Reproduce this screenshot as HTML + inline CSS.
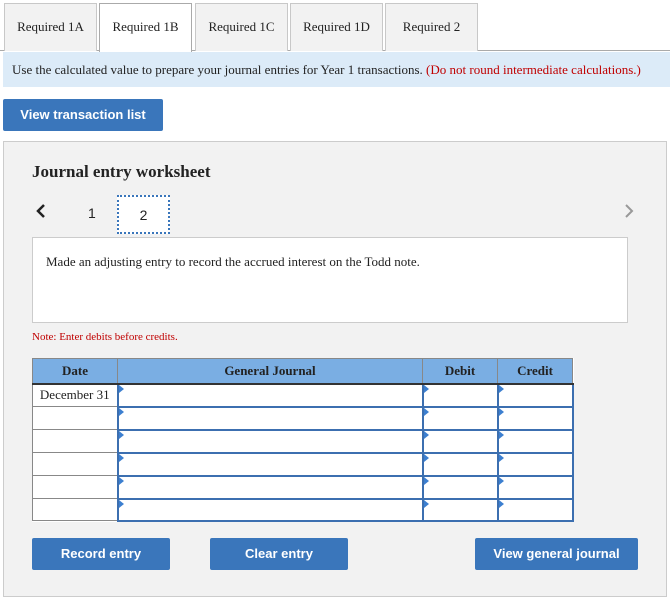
<!DOCTYPE html><html><head><style>
*{box-sizing:border-box;margin:0;padding:0}
body{width:670px;height:599px;background:#fff;font-family:"Liberation Serif",serif;position:relative;overflow:hidden;color:#222}
.a{position:absolute}
.tab{position:absolute;top:3px;height:48px;width:93px;background:#f2f2f2;border:1px solid #c8c8c8;border-bottom:none;font-size:13px;text-align:center;line-height:46px}
.btn{position:absolute;background:#3a76bb;color:#fff;font-family:"Liberation Sans",sans-serif;font-weight:bold;font-size:13px;text-align:center;border-radius:2px}
td{border:1px solid #888;padding:0;font-size:13px}
.i{border:2px solid #3c6fb0;background:#fff;position:relative}
.i:before{content:"";position:absolute;left:0;top:0;border-left:5px solid #3c7fd0;border-top:4px solid transparent;border-bottom:4px solid transparent}
</style></head><body>
<div class="a" style="left:0;top:50px;width:670px;height:1px;background:#aaa"></div>
<div class="tab" style="left:4px">Required 1A</div>
<div class="tab" style="left:99px;background:#fff;height:49px;border-color:#aaa">Required 1B</div>
<div class="tab" style="left:195px">Required 1C</div>
<div class="tab" style="left:290px">Required 1D</div>
<div class="tab" style="left:385px">Required 2</div>
<div class="a" style="left:3px;top:52px;width:667px;height:35px;background:#dcebf8;font-size:13px;line-height:35px;padding-left:9px">Use the calculated value to prepare your journal entries for Year 1 transactions. <span style="color:#c00000">(Do not round intermediate calculations.)</span></div>
<div class="btn" style="left:3px;top:99px;width:160px;height:32px;line-height:32px">View transaction list</div>
<div class="a" style="left:3px;top:141px;width:664px;height:456px;background:#f2f2f2;border:1px solid #ccc"></div>
<div class="a" style="left:32px;top:162px;font-size:17px;font-weight:bold">Journal entry worksheet</div>
<svg class="a" style="left:34px;top:203px" width="14" height="16"><path d="M10 2L4 8L10 14" stroke="#222" stroke-width="2.5" fill="none"/></svg>
<div class="a" style="left:88px;top:205px;font-family:'Liberation Sans',sans-serif;font-size:14px">1</div>
<div class="a" style="left:117px;top:195px;width:53px;height:39px;background:#fff;border:2px dotted #3a76bb;text-align:center;line-height:36px;font-family:'Liberation Sans',sans-serif;font-size:14px">2</div>
<svg class="a" style="left:622px;top:203px" width="14" height="16"><path d="M4 2L10 8L4 14" stroke="#999" stroke-width="2" fill="none"/></svg>
<div class="a" style="left:32px;top:237px;width:596px;height:86px;background:#fff;border:1px solid #ccc;font-size:13px;padding:16px 0 0 13px">Made an adjusting entry to record the accrued interest on the Todd note.</div>
<div class="a" style="left:32px;top:331px;font-size:11px;color:#c00000">Note: Enter debits before credits.</div>
<table class="a" style="left:32px;top:358px;border-collapse:collapse;background:#fff">
<tr style="height:25px;background:#7aaee3;font-weight:bold;text-align:center"><td style="width:85px;border-bottom:2px solid #333">Date</td><td style="width:305px;border-bottom:2px solid #333">General Journal</td><td style="width:75px;border-bottom:2px solid #333">Debit</td><td style="width:75px;border-bottom:2px solid #333">Credit</td></tr>
<tr style="height:23px"><td style="text-align:center">December 31</td><td class="i"></td><td class="i"></td><td class="i"></td></tr>
<tr style="height:23px"><td></td><td class="i"></td><td class="i"></td><td class="i"></td></tr>
<tr style="height:23px"><td></td><td class="i"></td><td class="i"></td><td class="i"></td></tr>
<tr style="height:23px"><td></td><td class="i"></td><td class="i"></td><td class="i"></td></tr>
<tr style="height:23px"><td></td><td class="i"></td><td class="i"></td><td class="i"></td></tr>
<tr style="height:22px"><td></td><td class="i"></td><td class="i"></td><td class="i"></td></tr>
</table>
<div class="btn" style="left:32px;top:538px;width:138px;height:32px;line-height:32px">Record entry</div>
<div class="btn" style="left:210px;top:538px;width:138px;height:32px;line-height:32px">Clear entry</div>
<div class="btn" style="left:475px;top:538px;width:163px;height:32px;line-height:32px">View general journal</div>
</body></html>
